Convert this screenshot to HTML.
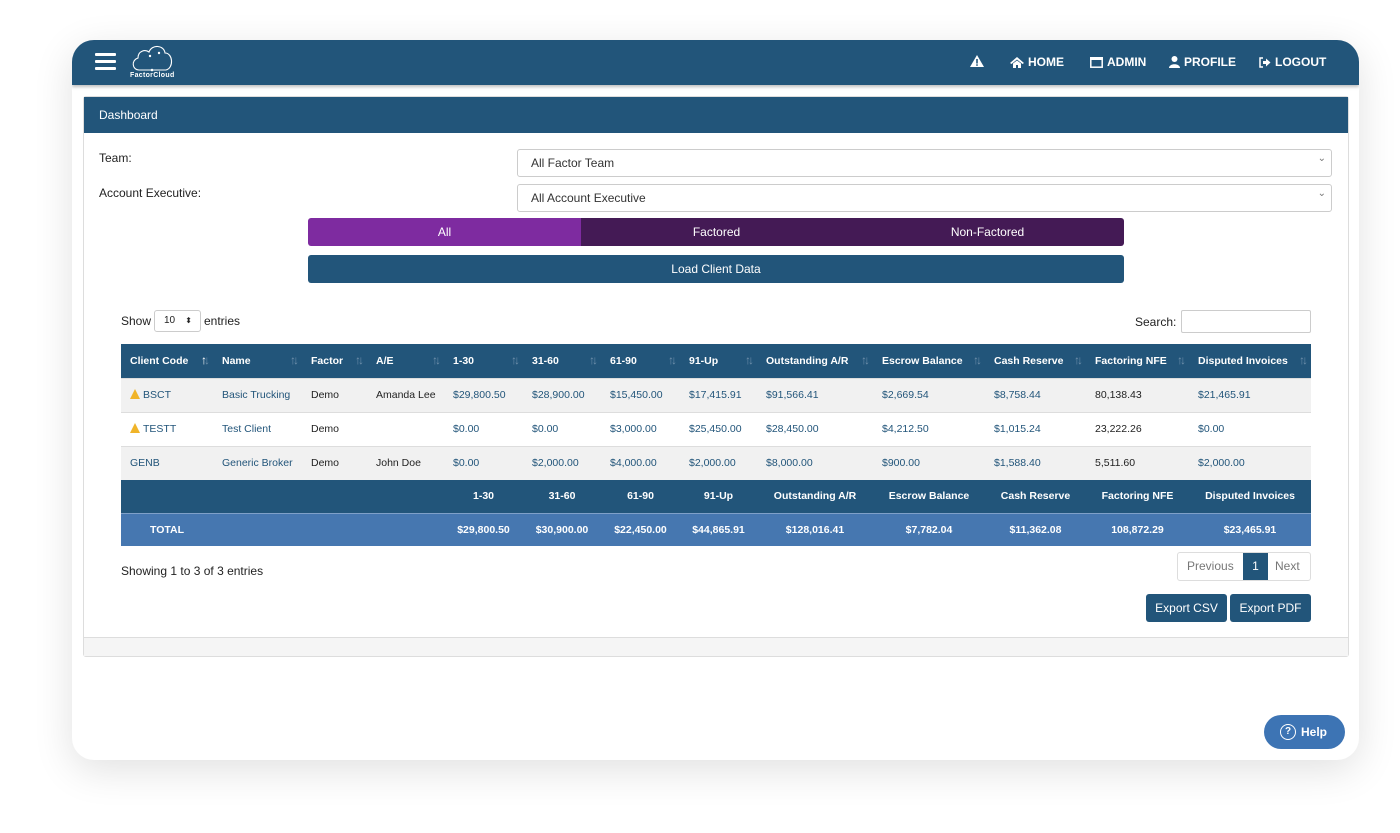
<!DOCTYPE html>
<html><head><style>
*{box-sizing:border-box;margin:0;padding:0}
body{width:1400px;height:833px;background:#fff;font-family:"Liberation Sans",sans-serif;position:relative;overflow:hidden;color:#222}
.a{position:absolute}
.frame{left:72px;top:40px;width:1287px;height:720px;border-radius:22px;background:#fff;box-shadow:0 10px 40px rgba(0,0,0,0.12);overflow:hidden}
.nav{left:0;top:0;width:1287px;height:45px;background:#22557a;box-shadow:0 2px 3px rgba(0,0,0,.25)}
.nav .it{position:absolute;top:15px;color:#fff;font-weight:bold;font-size:12px;display:flex;align-items:center;gap:4px}
.card{left:11px;top:56px;width:1266px;height:561px;border:1px solid #ddd;border-radius:3px;background:#fff}
.hd{left:0;top:0;width:1264px;height:36px;background:#22557a;color:#fff;font-size:12px;line-height:36px;padding-left:15px}
.lbl{font-size:12px;color:#222}
.sel{border:1px solid #ccc;border-radius:3px;height:28px;font-size:12px;line-height:26px;padding-left:13px;color:#333;background:#fff}
.sel:after{content:"\2304";position:absolute;right:5px;top:-4px;font-size:10px;color:#777}
table{border-collapse:collapse;table-layout:fixed;width:1190px;font-size:10.5px}
td,th{padding:0 0 0 9px;white-space:nowrap;overflow:hidden;text-align:left}
th{background:#22557a;color:#fff;height:34px;font-weight:bold;position:relative}
th span.s{position:absolute;right:6px;top:9px;color:#6f8fab;font-size:12px;letter-spacing:-3px}
td{height:34px;border-top:1px solid #ddd}
tr.g td{background:#f1f1f1}
.b{color:#22557a}
.f th{text-align:center;padding:0;height:33px}
.t td{background:#4677b0;color:#fff;font-weight:bold;text-align:center;padding:0;height:33px;border-top:1px solid #7fa0c8}
.warn{display:inline-block;width:0;height:0;border-left:5.5px solid transparent;border-right:5.5px solid transparent;border-bottom:10px solid #f0b429;vertical-align:-1px;margin-right:3px;position:relative}
.btn{background:#22557a;color:#fff;font-size:12px;border-radius:3px;text-align:center;height:28px;line-height:28px}
</style></head><body>
<div class="a frame">
 <div class="a nav">
  <div class="a" style="left:23px;top:13px;width:21px;height:3px;background:#fff;box-shadow:0 7px 0 #fff,0 14px 0 #fff;border-radius:1px"></div>
  <svg class="a" style="left:58px;top:3px" width="46" height="30" viewBox="0 0 46 30"><path d="M9 27 C2 27 1 17 8 15 C8 8 15 6 19 9 C22 1 34 2 35 10 C43 10 44 25 36 27 Z" fill="none" stroke="#fff" stroke-width="1.1"/><circle cx="22" cy="27" r="1.3" fill="#fff"/><circle cx="29" cy="10" r="1.2" fill="#fff"/><circle cx="20" cy="13" r="1.2" fill="#fff"/></svg>
  <div class="a" style="left:58px;top:32px;font-size:7px;color:#fff;font-weight:bold;letter-spacing:.3px">FactorCloud</div>
  <div class="it" style="left:898px"><svg width="14" height="12" viewBox="0 0 14 12"><path d="M7 0 L14 12 L0 12 Z" fill="#fff"/><rect x="6.2" y="4" width="1.6" height="4.5" fill="#22557a"/><rect x="6.2" y="9.3" width="1.6" height="1.5" fill="#22557a"/></svg></div>
  <div class="it" style="left:938px"><svg width="14" height="11" viewBox="0 0 14 11"><path d="M7 0 L14 6 L12.5 7 L7 2.5 L1.5 7 L0 6Z M3 6.5 L7 3.5 L11 6.5 V11 H8 V8 H6 V11 H3Z" fill="#fff"/></svg>HOME</div>
  <div class="it" style="left:1018px"><svg width="13" height="11" viewBox="0 0 13 11"><rect x="0.8" y="0.8" width="11.4" height="9.4" fill="none" stroke="#fff" stroke-width="1.5"/><rect x="0" y="0" width="13" height="3" fill="#fff"/></svg>ADMIN</div>
  <div class="it" style="left:1097px"><svg width="11" height="12" viewBox="0 0 11 12"><circle cx="5.5" cy="3" r="3" fill="#fff"/><path d="M0 12 C0 7 11 7 11 12Z" fill="#fff"/></svg>PROFILE</div>
  <div class="it" style="left:1187px"><svg width="12" height="11" viewBox="0 0 12 11"><path d="M4 1 H1 V10 H4" fill="none" stroke="#fff" stroke-width="1.5"/><path d="M4 4 H7 V1.5 L11.5 5.5 L7 9.5 V7 H4Z" fill="#fff"/></svg>LOGOUT</div>
 </div>
 <div class="a card">
  <div class="a hd">Dashboard</div>
  <div class="a lbl" style="left:15px;top:54px">Team:</div>
  <div class="a lbl" style="left:15px;top:89px">Account Executive:</div>
  <div class="a sel" style="left:433px;top:52px;width:815px">All Factor Team</div>
  <div class="a sel" style="left:433px;top:87px;width:815px">All Account Executive</div>
  <div class="a btn" style="left:224px;top:121px;width:273px;background:#7e2ba0;border-radius:3px 0 0 3px">All</div>
  <div class="a btn" style="left:497px;top:121px;width:543px;background:#441a55;border-radius:0 3px 3px 0"><span style="position:absolute;left:0;width:271px">Factored</span><span style="position:absolute;left:271px;width:271px">Non-Factored</span></div>
  <div class="a btn" style="left:224px;top:158px;width:816px">Load Client Data</div>
  <div class="a lbl" style="left:37px;top:217px">Show</div>
  <div class="a" style="left:70px;top:213px;width:47px;height:22px;border:1px solid #ccc;border-radius:3px;font-size:10px;line-height:20px;padding-left:9px">10 <span style="position:absolute;right:8px;font-size:8px">&#x2B0D;</span></div>
  <div class="a lbl" style="left:120px;top:217px">entries</div>
  <div class="a lbl" style="left:1051px;top:218px">Search:</div>
  <div class="a" style="left:1097px;top:213px;width:130px;height:23px;border:1px solid #ccc;border-radius:2px"></div>
  <table class="a" style="left:37px;top:247px">
   <colgroup><col style="width:92px"><col style="width:89px"><col style="width:65px"><col style="width:77px"><col style="width:79px"><col style="width:78px"><col style="width:79px"><col style="width:77px"><col style="width:116px"><col style="width:112px"><col style="width:101px"><col style="width:103px"><col style="width:122px"></colgroup>
   <tr><th>Client Code <span class="s" style="color:#fff">↑<span style="color:#6f8fab">↓</span></span></th><th>Name<span class="s">↑↓</span></th><th>Factor<span class="s">↑↓</span></th><th>A/E<span class="s">↑↓</span></th><th>1-30<span class="s">↑↓</span></th><th>31-60<span class="s">↑↓</span></th><th>61-90<span class="s">↑↓</span></th><th>91-Up<span class="s">↑↓</span></th><th>Outstanding A/R<span class="s">↑↓</span></th><th>Escrow Balance<span class="s">↑↓</span></th><th>Cash Reserve<span class="s">↑↓</span></th><th>Factoring NFE<span class="s">↑↓</span></th><th>Disputed Invoices<span class="s">↑↓</span></th></tr>
   <tr class="g"><td class="b"><span class="warn"></span>BSCT</td><td class="b">Basic Trucking</td><td>Demo</td><td>Amanda Lee</td><td class="b">$29,800.50</td><td class="b">$28,900.00</td><td class="b">$15,450.00</td><td class="b">$17,415.91</td><td class="b">$91,566.41</td><td class="b">$2,669.54</td><td class="b">$8,758.44</td><td>80,138.43</td><td class="b">$21,465.91</td></tr>
   <tr><td class="b"><span class="warn"></span>TESTT</td><td class="b">Test Client</td><td>Demo</td><td></td><td class="b">$0.00</td><td class="b">$0.00</td><td class="b">$3,000.00</td><td class="b">$25,450.00</td><td class="b">$28,450.00</td><td class="b">$4,212.50</td><td class="b">$1,015.24</td><td>23,222.26</td><td class="b">$0.00</td></tr>
   <tr class="g"><td class="b">GENB</td><td class="b">Generic Broker</td><td>Demo</td><td>John Doe</td><td class="b">$0.00</td><td class="b">$2,000.00</td><td class="b">$4,000.00</td><td class="b">$2,000.00</td><td class="b">$8,000.00</td><td class="b">$900.00</td><td class="b">$1,588.40</td><td>5,511.60</td><td class="b">$2,000.00</td></tr>
   <tr class="f"><th></th><th></th><th></th><th></th><th>1-30</th><th>31-60</th><th>61-90</th><th>91-Up</th><th>Outstanding A/R</th><th>Escrow Balance</th><th>Cash Reserve</th><th>Factoring NFE</th><th>Disputed Invoices</th></tr>
   <tr class="t"><td>TOTAL</td><td></td><td></td><td></td><td>$29,800.50</td><td>$30,900.00</td><td>$22,450.00</td><td>$44,865.91</td><td>$128,016.41</td><td>$7,782.04</td><td>$11,362.08</td><td>108,872.29</td><td>$23,465.91</td></tr>
  </table>
  <div class="a lbl" style="left:37px;top:467px">Showing 1 to 3 of 3 entries</div>
  <div class="a" style="left:1093px;top:455px;width:134px;height:29px;border:1px solid #ddd;border-radius:3px;font-size:12px;color:#777;line-height:27px"><span class="a" style="left:9px">Previous</span><span class="a" style="left:65px;width:25px;height:27px;background:#22557a;color:#fff;text-align:center">1</span><span class="a" style="left:97px">Next</span></div>
  <div class="a btn" style="left:1062px;top:497px;width:81px">Export CSV</div>
  <div class="a btn" style="left:1146px;top:497px;width:81px">Export PDF</div>
  <div class="a" style="left:0;top:540px;width:1264px;height:19px;background:#f5f5f5;border-top:1px solid #ddd"></div>
 </div>
 <div class="a" style="left:1192px;top:675px;width:81px;height:34px;border-radius:17px;background:#3d74b4;color:#fff;font-weight:bold;font-size:12px;line-height:34px;padding-left:37px"><span class="a" style="left:16px;top:9px;width:16px;height:16px;border:1.5px solid #fff;border-radius:50%;font-size:10px;line-height:13px;text-align:center">?</span>Help</div>
</div>
</body></html>
